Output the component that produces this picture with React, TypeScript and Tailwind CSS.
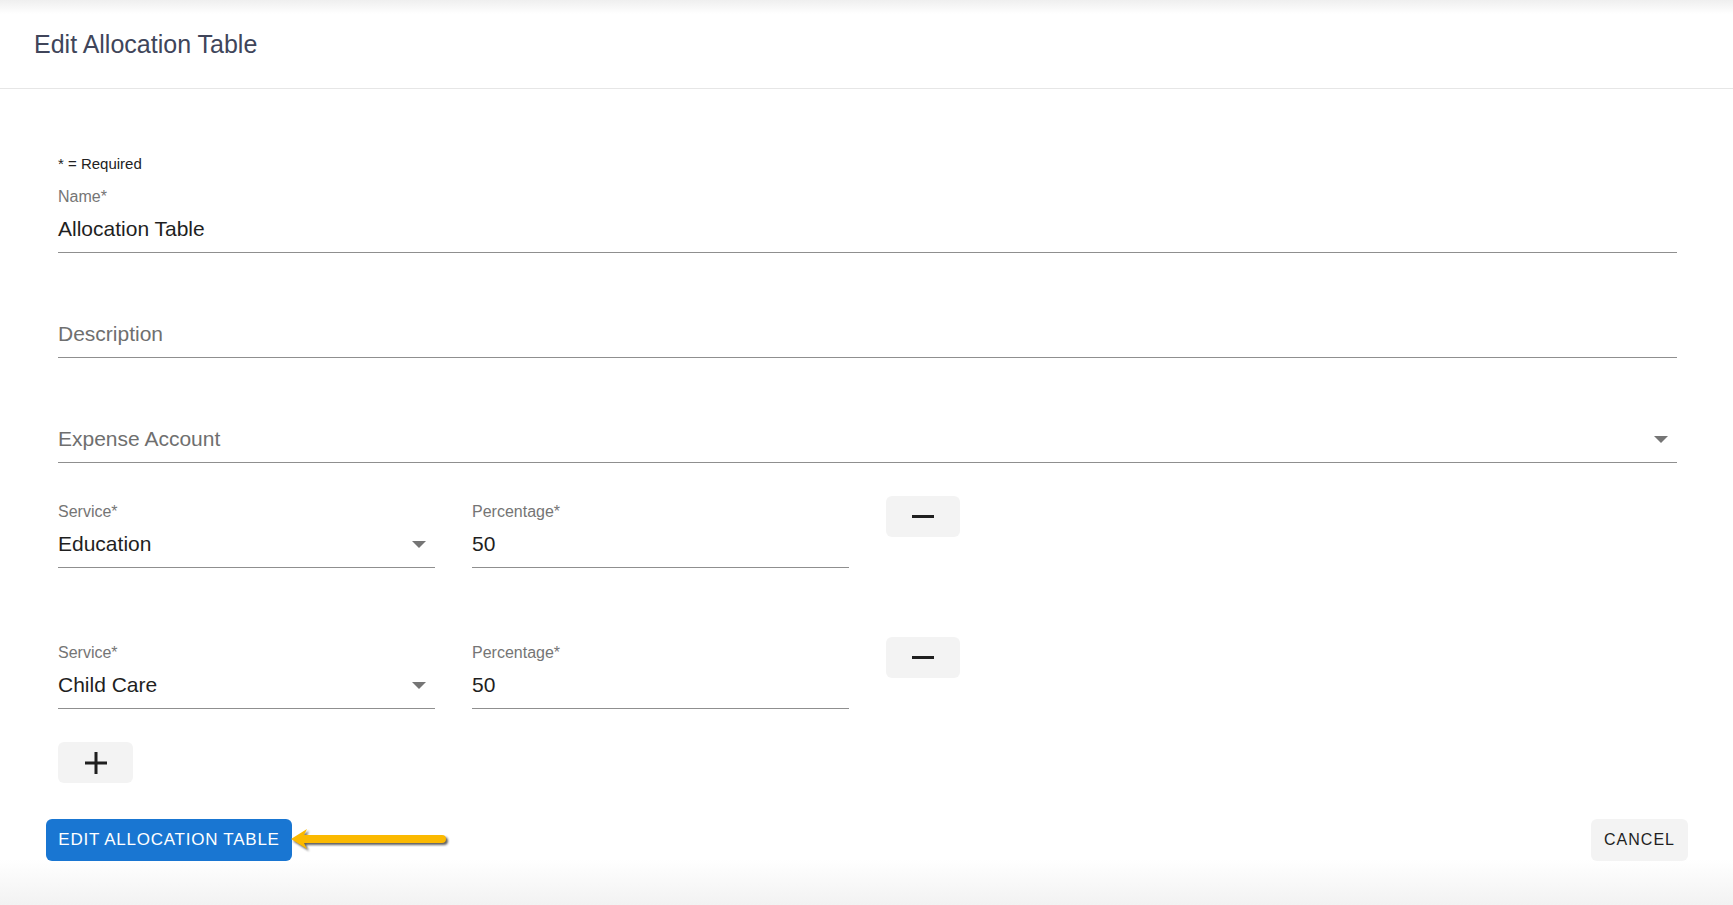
import React from "react";

function Caret() {
  return (
    <svg width="14" height="7" viewBox="0 0 14 7" className="shrink-0">
      <polygon points="0,0 14,0 7,7" fill="#757575" />
    </svg>
  );
}

function Field({
  label,
  value,
  placeholder,
  caret,
  className = "",
}: {
  label?: string;
  value?: string;
  placeholder?: string;
  caret?: boolean;
  className?: string;
}) {
  return (
    <div className={`flex flex-col border-b border-[#8f8f8f] ${className}`}>
      <div className="h-[18px] text-[16px] leading-[18px] text-[#757575]">{label}</div>
      <div className="h-[46px] flex items-center justify-between pr-[9px]">
        {value ? (
          <span className="text-[21px] text-[#1f1f1f]">{value}</span>
        ) : (
          <span className="text-[21px] text-[#6f6f6f]">{placeholder}</span>
        )}
        {caret && <Caret />}
      </div>
    </div>
  );
}

function MinusIcon() {
  return (
    <svg width="22" height="3" viewBox="0 0 22 3">
      <rect x="0" y="0" width="22" height="3" fill="#1f1f1f" />
    </svg>
  );
}

function PlusIcon() {
  return (
    <svg width="22" height="22" viewBox="0 0 22 22">
      <rect x="0" y="9.5" width="22" height="3" fill="#1f1f1f" />
      <rect x="9.5" y="0" width="3" height="22" fill="#1f1f1f" />
    </svg>
  );
}

function ServiceRow({ service, className = "" }: { service: string; className?: string }) {
  return (
    <div className={`flex items-start ${className}`}>
      <Field label="Service*" value={service} caret className="w-[377px]" />
      <Field label="Percentage*" value="50" className="w-[377px] ml-[37px]" />
      <button className="ml-[37px] -mt-[7px] w-[74px] h-[41px] rounded-md bg-[#f3f3f3] flex items-center justify-center">
        <MinusIcon />
      </button>
    </div>
  );
}

function YellowArrow() {
  const d = "M1 13 L17 3 L14 9 L152 9 A4 4 0 0 1 152 17 L14 17 L17 23 Z";
  return (
    <svg width="160" height="28" viewBox="0 0 160 28" className="-ml-[2px] shrink-0">
      <defs>
        <filter id="ash" x="-10%" y="-50%" width="120%" height="200%">
          <feGaussianBlur stdDeviation="0.8" />
        </filter>
      </defs>
      <path d={d} transform="translate(2,2)" fill="#2b2b2b" opacity="0.75" filter="url(#ash)" />
      <path d={d} fill="#fbb900" />
    </svg>
  );
}

export default function App() {
  return (
    <div className="h-[905px] w-full flex flex-col font-['Liberation_Sans',Arial,sans-serif] bg-[linear-gradient(to_bottom,#efefef_0px,#ffffff_14px,#ffffff_860px,#f2f2f2_905px)]">
      <header className="h-[89px] shrink-0 flex items-center pl-[34px] border-b border-[#e6e6e6]">
        <h1 className="text-[25px] leading-none text-[#40455a]">Edit Allocation Table</h1>
      </header>
      <main className="flex-1 flex flex-col pt-[66px] pl-[58px] pr-[56px]">
        <p className="text-[15px] leading-[18px] text-[#222222]">* = Required</p>
        <Field label="Name*" value="Allocation Table" className="mt-[15px]" />
        <Field placeholder="Description" className="mt-[40px]" />
        <Field placeholder="Expense Account" caret className="mt-[40px]" />
        <ServiceRow service="Education" className="mt-[40px]" />
        <ServiceRow service="Child Care" className="mt-[76px]" />
        <div className="mt-[33px]">
          <button className="w-[75px] h-[41px] rounded-md bg-[#f3f3f3] flex items-center justify-center">
            <PlusIcon />
          </button>
        </div>
        <div className="mt-[36px] -ml-[12px] -mr-[11px] flex items-center justify-between">
          <div className="flex items-center">
            <button className="h-[42px] w-[246px] rounded-md bg-[#1976d2] text-white text-[17px] tracking-[0.75px] flex items-center justify-center">
              EDIT ALLOCATION TABLE
            </button>
            <YellowArrow />
          </div>
          <button className="h-[42px] w-[97px] rounded-md bg-[#f3f3f3] text-[#1f1f1f] text-[16px] tracking-[1px] flex items-center justify-center">
            CANCEL
          </button>
        </div>
      </main>
    </div>
  );
}
